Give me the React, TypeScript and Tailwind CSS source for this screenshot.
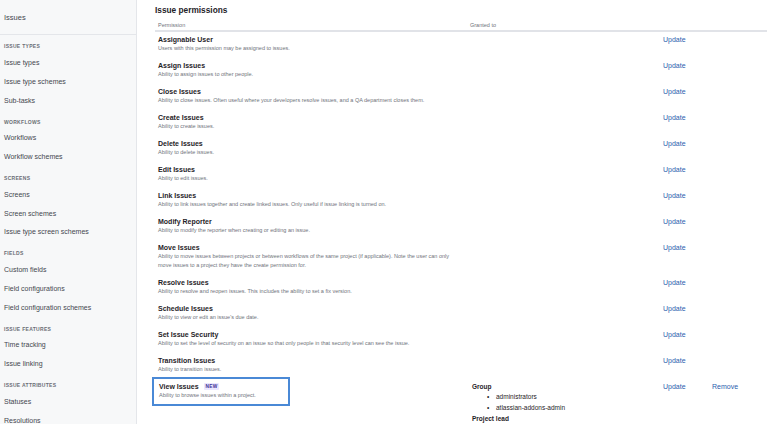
import React from "react"

const sections = [
  { title: "Issue types", items: ["Issue types", "Issue type schemes", "Sub-tasks"] },
  { title: "Workflows", items: ["Workflows", "Workflow schemes"] },
  { title: "Screens", items: ["Screens", "Screen schemes", "Issue type screen schemes"] },
  { title: "Fields", items: ["Custom fields", "Field configurations", "Field configuration schemes"] },
  { title: "Issue features", items: ["Time tracking", "Issue linking"] },
  { title: "Issue attributes", items: ["Statuses", "Resolutions"] },
]

const permissions = [
  { name: "Assignable User", desc: ["Users with this permission may be assigned to issues."] },
  { name: "Assign Issues", desc: ["Ability to assign issues to other people."] },
  {
    name: "Close Issues",
    desc: ["Ability to close issues. Often useful where your developers resolve issues, and a QA department closes them."],
  },
  { name: "Create Issues", desc: ["Ability to create issues."] },
  { name: "Delete Issues", desc: ["Ability to delete issues."] },
  { name: "Edit Issues", desc: ["Ability to edit issues."] },
  {
    name: "Link Issues",
    desc: ["Ability to link issues together and create linked issues. Only useful if issue linking is turned on."],
  },
  { name: "Modify Reporter", desc: ["Ability to modify the reporter when creating or editing an issue."] },
  {
    name: "Move Issues",
    desc: [
      "Ability to move issues between projects or between workflows of the same project (if applicable). Note the user can only",
      "move issues to a project they have the create permission for.",
    ],
  },
  { name: "Resolve Issues", desc: ["Ability to resolve and reopen issues. This includes the ability to set a fix version."] },
  { name: "Schedule Issues", desc: ["Ability to view or edit an issue's due date."] },
  {
    name: "Set Issue Security",
    desc: ["Ability to set the level of security on an issue so that only people in that security level can see the issue."],
  },
  { name: "Transition Issues", desc: ["Ability to transition issues."] },
]

function Sidebar() {
  return (
    <aside className="w-[137px] shrink-0 bg-[#f7f8f9] border-r border-[#e4e6ea] h-full">
      <div className="h-[35px] border-b border-[#e4e6ea] pl-[4px] pt-[12px] text-[7.5px] leading-[12px] font-medium text-[#44474f]">
        Issues
      </div>
      <div className="pt-[5px]">
        {sections.map((s, i) => (
          <div key={s.title} className={i === 0 ? "" : "mt-[5px]"}>
            <div className="h-[14px] flex items-center pl-[4px] text-[5px] font-bold uppercase tracking-[0.3px] text-[#6b6e76]">
              {s.title}
            </div>
            {s.items.map((item) => (
              <div key={item} className="h-[18.75px] flex items-center pl-[4px] text-[7px] text-[#44474f]">
                {item}
              </div>
            ))}
          </div>
        ))}
      </div>
    </aside>
  )
}

function PermissionRow({ name, desc }: { name: string; desc: string[] }) {
  return (
    <div className="grid grid-cols-[312px_193px_49px_1fr] pt-[3px] pb-[5px]">
      <div className="pl-[3px]">
        <div className="text-[7px] leading-[9px] font-bold text-[#1f2328]">{name}</div>
        {desc.map((d) => (
          <div key={d} className="text-[5.5px] leading-[9px] text-[#6f737b] whitespace-nowrap">
            {d}
          </div>
        ))}
      </div>
      <div />
      <div className="pl-[3px] text-[7px] leading-[9px] text-[#2c5eae]">Update</div>
      <div />
    </div>
  )
}

export default function App() {
  return (
    <div className="flex w-[775px] h-[424px] overflow-hidden bg-white font-['Liberation_Sans',Arial,sans-serif]">
      <Sidebar />
      <main className="flex-1 pl-[18px] pr-[8px]">
        <h1 className="pt-[4px] h-[18px] text-[8.3px] leading-[12px] font-bold text-[#1f2328]">Issue permissions</h1>
        <div className="grid grid-cols-[312px_193px_49px_1fr] h-[14px] pt-[3px] items-center border-b-2 border-[#e1e3e8] text-[5.5px] text-[#6f737b]">
          <div className="pl-[3px]">Permission</div>
          <div className="pl-[3px]">Granted to</div>
          <div />
          <div />
        </div>
        {permissions.map((p) => (
          <PermissionRow key={p.name} name={p.name} desc={p.desc} />
        ))}
        <div className="grid grid-cols-[312px_193px_49px_1fr] pt-[3px]">
          <div>
            <div className="-mt-[5.5px] -ml-[3px] w-[138px] border-2 border-[#4a89d6] pl-[5px] pt-[3.5px] pb-[3.5px]">
              <div className="flex items-center gap-[5px] text-[7px] leading-[9px] font-bold text-[#1f2328]">
                View Issues
                <span className="bg-[#eae6ff] text-[#403294] text-[4.8px] leading-[7px] px-[2px] rounded-[1px] tracking-[0.2px]">
                  NEW
                </span>
              </div>
              <div className="text-[5.5px] leading-[9px] text-[#6f737b]">Ability to browse issues within a project.</div>
            </div>
          </div>
          <div className="pl-[5px] text-[6.5px] text-[#1f2328]">
            <div className="font-bold leading-[9px]">Group</div>
            <div className="flex items-center leading-[11px]">
              <span className="w-[24px] pl-[15px]">•</span>
              administrators
            </div>
            <div className="flex items-center leading-[12px]">
              <span className="w-[24px] pl-[15px]">•</span>
              atlassian-addons-admin
            </div>
            <div className="font-bold leading-[8px] mt-[1px]">Project lead</div>
          </div>
          <div className="pl-[3px] text-[7px] leading-[9px] text-[#2c5eae]">Update</div>
          <div className="pl-[3px] text-[7px] leading-[9px] text-[#2c5eae]">Remove</div>
        </div>
      </main>
    </div>
  )
}
